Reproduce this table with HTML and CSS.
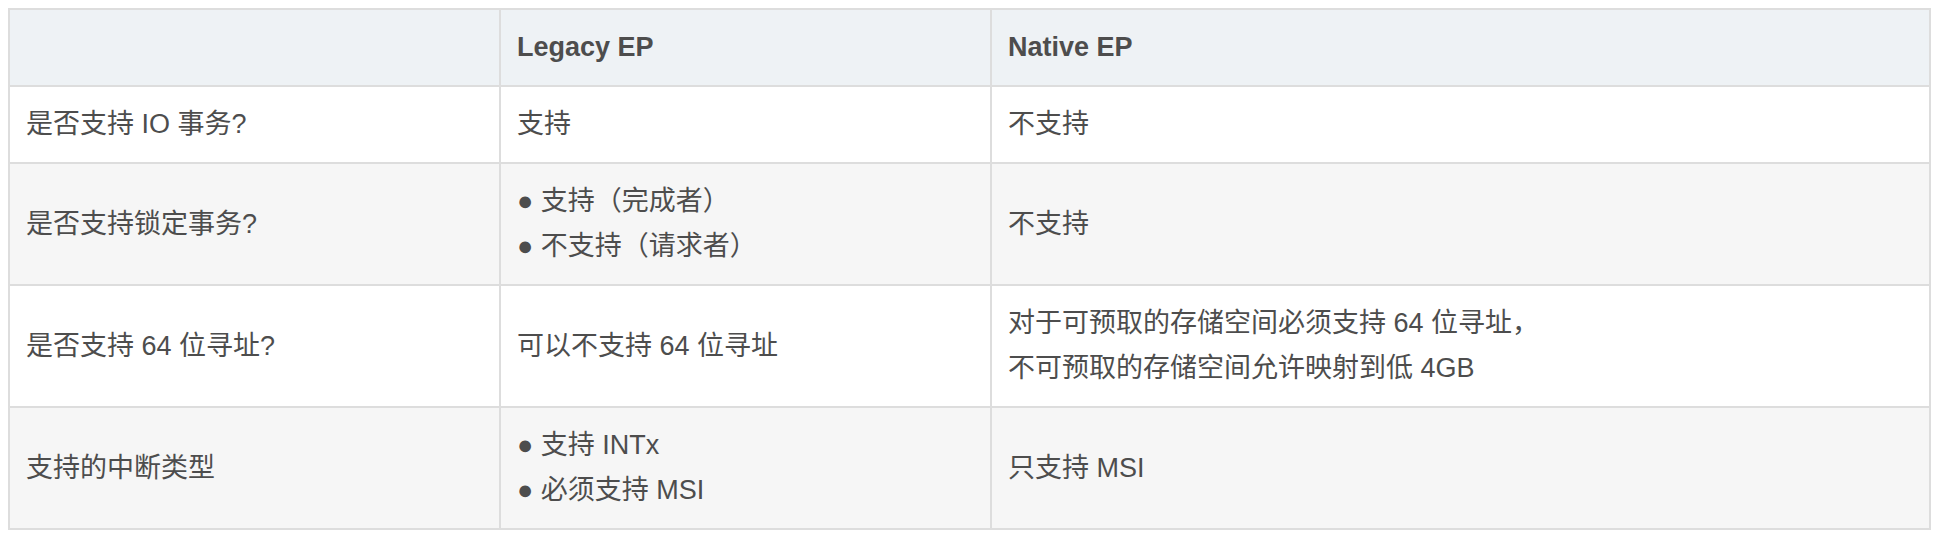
FILE: index.html
```html
<!DOCTYPE html>
<html lang="zh-CN">
<head>
<meta charset="utf-8">
<title>Legacy EP vs Native EP</title>
<link rel="stylesheet" href="styles.css">
</head>
<body>
<table class="cmp">
  <colgroup>
    <col class="c1">
    <col class="c2">
    <col class="c3">
  </colgroup>
  <thead>
    <tr>
      <th></th>
      <th>Legacy EP</th>
      <th>Native EP</th>
    </tr>
  </thead>
  <tbody>
    <tr>
      <td>是否支持 IO 事务?</td>
      <td>支持</td>
      <td>不支持</td>
    </tr>
    <tr>
      <td>是否支持锁定事务?</td>
      <td>● 支持（完成者）<br>● 不支持（请求者）</td>
      <td>不支持</td>
    </tr>
    <tr>
      <td>是否支持 64 位寻址?</td>
      <td>可以不支持 64 位寻址</td>
      <td>对于可预取的存储空间必须支持 64 位寻址，<br>不可预取的存储空间允许映射到低 4GB</td>
    </tr>
    <tr>
      <td>支持的中断类型</td>
      <td>● 支持 INTx<br>● 必须支持 MSI</td>
      <td>只支持 MSI</td>
    </tr>
  </tbody>
</table>
</body>
</html>
```
FILE: styles.css
```css
html, body {
  background: #ffffff;
}
body {
  margin: 8px;
  font-family: "Liberation Sans", "Noto Sans CJK SC", sans-serif;
  font-size: 27px;
  color: #4d4d4d;
}
.cmp {
  width: 1923px;
  border-collapse: collapse;
  table-layout: fixed;
  border: 2px solid #dddddd;
}
.cmp .c1 { width: 491px; }
.cmp .c2 { width: 491px; }
.cmp .c3 { width: auto; }
.cmp tr {
  height: 76px;
}
.cmp th,
.cmp td {
  border: 2px solid #dddddd;
  padding: 15px 16px;
  line-height: 45px;
  text-align: left;
  vertical-align: middle;
}
.cmp th {
  background: #eef2f5;
  font-weight: bold;
}
.cmp tbody tr:nth-child(odd) td {
  background: #ffffff;
}
.cmp tbody tr:nth-child(even) td {
  background: #f6f6f6;
}
```
